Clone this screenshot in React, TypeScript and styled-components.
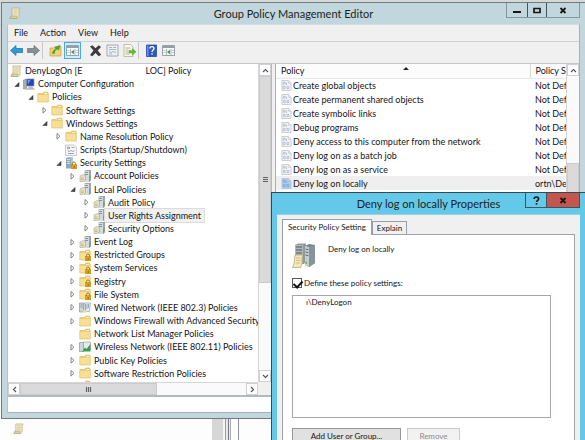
import React from 'react';
import styled, { createGlobalStyle, css } from 'styled-components';

const uiFont = 'Lato, "Open Sans", sans-serif';

const Global = createGlobalStyle`
  * { box-sizing: border-box; }
  html, body { margin: 0; padding: 0; }
  body { font-family: ${uiFont}; font-size: 9px; line-height: 13px; color: #15151a; overflow: hidden; }
  button { font: inherit; color: inherit; padding: 0; border: 0; background: none; }
  ul { list-style: none; margin: 0; padding: 0; }
`;

/* ---------- icons ---------- */

const Svg = styled.svg`
  display: block;
  flex: none;
`;

type IconName =
  | 'scroll' | 'computer' | 'folder' | 'script' | 'security' | 'server'
  | 'lockfolder' | 'wired' | 'wireless' | 'policy' | 'policySelected';

const Folder = () => (
  <>
    <path d="M.8 2.500h5l1-1.500h4v1.500h.5v8.500H.8z" fill="#eecb6c" stroke="#dcb85f" strokeWidth=".6" />
    <path d="M1.200 4h9.600v6.500H1.200z" fill="#f8df98" />
    <path d="M7.200 2h3v1h-3z" fill="#fff6d4" />
  </>
);

const Lock = () => (
  <>
    <path d="M7.500 8V6.500a1.500 1.500 0 0 1 3 0V8" fill="none" stroke="#a5781a" strokeWidth="1" />
    <rect x="6.500" y="7.500" width="5.500" height="4.500" fill="#e0a01c" stroke="#b98418" strokeWidth=".5" />
    <path d="M9.200 9v1.800" stroke="#7b5a18" strokeWidth=".8" />
  </>
);

const Server = () => (
  <>
    <path d="M5 1l2-1h5v10l-1.500 2H5z" fill="#9aa6ab" />
    <path d="M5 1h5v11H5z" fill="#d3dbde" />
    <path d="M6 2.500h3M6 4.500h3" stroke="#718087" strokeWidth=".8" />
    <path d="M10.800 6v5" stroke="#56b04a" strokeWidth="1" />
  </>
);

const PolicySheet = ({ tint, ink }: { tint: string; ink: string }) => (
  <>
    <path d="M1 .5h7l3 3v8H1z" fill={tint} stroke="#bcc0c9" strokeWidth=".8" />
    <path d="M8 .5v3h3" fill="none" stroke="#bcc0c9" strokeWidth=".7" />
    <path d="M2.500 2.500h2v2h-2zM2.500 7h2v2.500h-2zM6.500 7h2v2.500h-2zM6 3v2.500" fill="none" stroke={ink} strokeWidth=".8" />
  </>
);

const drawings: Record<IconName, React.ReactNode> = {
  scroll: (
    <>
      <path d="M3 1h8l-1 2v6.500l-1.500 2H1l1-2.500h1z" fill="#f1e7c6" stroke="#b9aa82" strokeWidth=".7" />
      <path d="M4.500 3h4M4.500 5h4M4.300 7h4" stroke="#c9bd98" strokeWidth=".7" />
      <path d="M1 11.500l1-2.500h6l-.5 2.500z" fill="#dccf9f" stroke="#a99a70" strokeWidth=".5" />
    </>
  ),
  computer: (
    <>
      <path d="M.5 2l3-1v9l-3 1z" fill="#a6adb4" stroke="#747d86" strokeWidth=".5" />
      <path d="M3.500 1h7.500v7H3.500z" fill="#2447b8" stroke="#8990a0" strokeWidth=".7" />
      <path d="M4.500 2h3L5 6.500z" fill="#6e9cf0" />
      <path d="M6 8h3l1.500 2.500H4.500z" fill="#b9bec6" />
      <path d="M2 11h9.500" stroke="#8e959e" />
    </>
  ),
  folder: <Folder />,
  script: (
    <>
      <path d="M.5 1h9l2 2v8.500H.5z" fill="#f4f5f6" stroke="#b5b9be" strokeWidth=".7" />
      <path d="M2.500 3h2v1.500h-2zM6.500 3.500h3M2.500 6.500l1.500 1 2-1 2 1 1.500-1M3 9.500h6" fill="none" stroke="#8b9299" strokeWidth=".8" />
    </>
  ),
  security: (
    <>
      <path d="M1 1l2-1h5v11H1z" fill="#b3c6d2" />
      <path d="M1 1h5v10.500H1z" fill="#8fa9b9" />
      <path d="M2 2.500h3M2 4.500h3M2 6.500h3" stroke="#e4edf2" strokeWidth=".8" />
      <Lock />
    </>
  ),
  server: (
    <>
      <Server />
      <path d="M1 6l3-1.500 2.500 1V10L4 11.500H1z" fill="#e9e0c0" stroke="#9d9878" strokeWidth=".5" />
      <path d="M2 8h2.500M2 9.500h2.500" stroke="#aaa27a" strokeWidth=".6" />
    </>
  ),
  lockfolder: (
    <>
      <Folder />
      <Lock />
    </>
  ),
  wired: (
    <>
      <path d="M.5 2h4v9h-4z" fill="#cfd6da" stroke="#7d888f" strokeWidth=".6" />
      <path d="M1.500 4h2M1.500 6h2" stroke="#6a767d" strokeWidth=".7" />
      <path d="M5 2h6.500l-1 8.500H5z" fill="#e8edf0" stroke="#7e97a8" strokeWidth=".6" />
      <path d="M6.500 3v6M8 3v5M9.500 3v4" stroke="#5f93b5" strokeWidth=".7" />
      <path d="M4 9h4v2.500H4z" fill="#e5d9a8" />
    </>
  ),
  wireless: (
    <>
      <path d="M.5 1.500h4v9h-4z" fill="#cfd6da" stroke="#7d888f" strokeWidth=".6" />
      <path d="M4.500 1h7v8h-7z" fill="#e3ece6" stroke="#8aa092" strokeWidth=".6" />
      <path d="M3 10.500h8.500V3L7.500 8 6 6.500z" fill="#3f9a55" />
    </>
  ),
  policy: <PolicySheet tint="#f3f4f7" ink="#a9afbe" />,
  policySelected: <PolicySheet tint="#a9cff2" ink="#6f9fd0" />,
};

const Icon = ({ name, size = 11 }: { name: IconName; size?: number }) => (
  <Svg width={size} height={size} viewBox="0 0 12 12" aria-hidden="true">{drawings[name]}</Svg>
);

const Chevron = ({ d }: { d: string }) => (
  <Svg width="7" height="7" viewBox="0 0 7 7" aria-hidden="true">
    <path d={d} fill="none" stroke="#55585c" strokeWidth="1.200" />
  </Svg>
);

const chevrons = {
  up: 'M1 5l2.500-2.500L6 5',
  down: 'M1 2l2.500 2.500L6 2',
  left: 'M5 1L2.500 3.500 5 6',
  right: 'M2 1l2.500 2.500L2 6',
};

const ConsoleGlyph = () => (
  <>
    <path d="M.5 1.500h12v10H.5z" fill="#f6f8f9" stroke="#8f9aa2" strokeWidth=".9" />
    <path d="M1 2h11v2H1z" fill="#93a0aa" />
    <path d="M4.500 5v6M9 5v6" stroke="#9aa5ad" strokeWidth=".8" />
    <path d="M8 5.800v4.400L5 8z" fill="#3aa544" />
    <path d="M10 6.500h2M10 8.500h2M1.500 6.500h2M1.500 8.500h2" stroke="#b0bcc5" strokeWidth=".8" />
  </>
);

const toolDrawings = {
  back: <path d="M.5 6.500L6 1.500v3h6.500v4H6v3z" fill="#2b9be0" stroke="#1c6ea8" strokeWidth=".7" />,
  forward: <path d="M12.500 6.500L7 1.500v3H.5v4H7v3z" fill="#8b8e91" stroke="#6b6e71" strokeWidth=".7" />,
  up: (
    <>
      <path d="M1 4h4l1-1.500h6V12H1z" fill="#f0d27c" stroke="#c79f43" strokeWidth=".7" />
      <path d="M3.500 9.500C3.500 7 5 5.500 7 5.300L6 3.500l5-2.300-1.300 5-1.200-1.300C6.500 5.500 5.500 7 5.500 9.500z" fill="#42b035" stroke="#2b8423" strokeWidth=".4" />
    </>
  ),
  console: <ConsoleGlyph />,
  remove: <path d="M1 2.500L4.500 6.500 1 11l2.300 1.200L6.500 9l3.200 3.200 2.500-1.500-3.500-4.200L12 3 9.800 1.200 6.500 4.300 3.300 1.200z" fill="#3a3d40" />,
  properties: (
    <>
      <path d="M1 1h11v11H1z" fill="#eef1f4" stroke="#97a0a8" strokeWidth=".9" />
      <path d="M3 3.500h3M7 3.500h3M3 5.500h7M3 7.500l2 1 2-1 3 1M3 10h3" fill="none" stroke="#94a4b5" strokeWidth=".8" />
    </>
  ),
  exportList: (
    <>
      <path d="M1 .5h6.500L10 3v9.500H1z" fill="#fbf8e6" stroke="#a9a590" strokeWidth=".7" />
      <path d="M2.500 4h5M2.500 6h3M2.500 8h3M2.500 10h4" stroke="#9a9680" strokeWidth=".7" />
      <path d="M6 6.500h3.500v-2l3.500 3.300-3.500 3.200V9H6z" fill="#62bf3c" stroke="#3d9224" strokeWidth=".4" />
    </>
  ),
  help: (
    <>
      <path d="M1.500 1h10v11.500h-10z" fill="#2f56c2" stroke="#1c3a92" strokeWidth=".7" />
      <path d="M2 1.500h1.500v10.500H2z" fill="#6f8fe4" />
      <path d="M5 4.500c0-2.400 4-2.400 4 0 0 1.500-2 1.700-2 3.500" fill="none" stroke="#fff" strokeWidth="1.300" />
      <path d="M6.300 9.200h1.500v1.400H6.300z" fill="#fff" />
    </>
  ),
};
type Tool = keyof typeof toolDrawings;

/* ---------- desktop ---------- */

const Desktop = styled.main`
  position: relative;
  height: 100vh;
  overflow: hidden;
  background: #fdfdfd;
  display: flex;
  flex-direction: column;
  justify-content: space-between;
`;

const BackTop = styled.div`
  height: 160px;
  background: #d5d7d8;
`;

const BackBottom = styled.div`
  height: 22px;
  display: flex;
`;

const BackTree = styled.div`
  flex: none;
  width: 212px;
  padding: 5px 0 0 13px;
`;

const BackScroll = styled.div`
  flex: none;
  width: 27px;
  border-right: 1px solid #8d9096;
  background: linear-gradient(90deg, #d6d6d6 11px, #f4f4f4 11px 13px, #9b9ea2 13px 14px, #e8e8e8 14px 16px, #777a7e 16px 17px, #e8e8e8 17px 18px, #a8abb0 18px 19px, #fdfdfd 19px);
`;

/* ---------- editor window ---------- */

const EditorWindow = styled.section`
  position: absolute;
  inset: 2px 0 21px 1px;
  display: flex;
  flex-direction: column;
  border: 1px solid #74797c;
  border-right: 0;
  padding: 0 5px 5px;
  background: #c2d6dd;
`;

const TitleBar = styled.header<{ $height: number }>`
  display: grid;
  grid-template-columns: 1fr auto 1fr;
  flex: none;
  height: ${p => p.$height}px;
`;

const TitleIcon = styled.span`
  padding: 4px 0 0 2px;
`;

const Title = styled.h1`
  grid-column: 2;
  margin: 0;
  font-size: 11px;
  font-weight: 400;
  line-height: 22px;
  color: #1c1f22;
  white-space: nowrap;
`;

const Caption = styled.div<{ $tone: string }>`
  display: flex;
  justify-self: end;
  height: 15px;
  border: 1px solid ${p => p.$tone};
  border-top: 0;
`;

const CaptionButton = styled.button<{ $width: number; $tone: string; $danger?: boolean }>`
  display: flex;
  align-items: center;
  justify-content: center;
  width: ${p => p.$width}px;
  background: ${p => (p.$danger ? '#c3574e' : 'transparent')};
  & + & { border-left: 1px solid ${p => p.$tone}; }
`;

const Client = styled.div`
  flex: 1;
  min-height: 0;
  display: flex;
  flex-direction: column;
  border: 1px solid #a7b2b8;
  border-top-color: #d5dde0;
  border-left-color: #b3c3ca;
  background: #f0f0f0;
`;

const MenuBar = styled.nav`
  flex: none;
  display: flex;
  gap: 12px;
  height: 17px;
  padding-left: 6px;
  border-bottom: 1px solid #d0d1d3;
`;

const MenuItem = styled.button`
  line-height: 16px;
`;

const ToolBar = styled.div`
  flex: none;
  display: flex;
  height: 22px;
  padding: 0 0 4px;
  border-bottom: 1px solid #c3c6ca;
`;

const ToolButton = styled.button<{ $active?: boolean; $gap?: boolean }>`
  display: flex;
  align-items: center;
  justify-content: center;
  width: 17px;
  height: 17px;
  ${p => p.$active && css`background: #d3eaf9; border: 1px solid #4aa9de;`}
  ${p => p.$gap && css`margin-left: 6px;`}
`;

const Separator = styled.span`
  width: 5px;
  border-left: 1px solid #c6c8ca;
`;

const Panes = styled.div`
  flex: 1;
  min-height: 0;
  display: flex;
  gap: 3px;
`;

const TreePane = styled.div`
  flex: none;
  width: 264px;
  display: grid;
  grid-template-columns: 1fr 13px;
  grid-template-rows: 1fr 13px;
  border-right: 1px solid #b4b9bf;
  background: #f0f0f0;
`;

const TreeView = styled.div`
  min-height: 0;
  overflow: hidden;
  background: #fff;
`;

const TreeRows = styled.ul`
  display: grid;
  grid-auto-rows: 1fr;
  height: 329px;
`;

const TreeRow = styled.li<{ $level: number }>`
  display: flex;
  align-items: center;
  padding-left: ${p => 2 + Math.max(p.$level - 1, 0) * 14}px;
  white-space: pre;
`;

const Toggle = styled.button`
  display: flex;
  justify-content: center;
  flex: none;
  width: 13px;
`;

const Label = styled.span<{ $selected?: boolean }>`
  padding-left: 3px;
  ${p => p.$selected && css`padding-right: 3px; background: #f0f0f0; outline: 1px solid #dcdcdc;`}
`;

const RedactedGap = styled.span`
  display: inline-block;
  width: 63px;
`;

const ScrollBar = styled.div<{ $horizontal?: boolean }>`
  display: flex;
  flex-direction: ${p => (p.$horizontal ? 'row' : 'column')};
  min-width: 0;
  min-height: 0;
  border: 0 solid #d5d6d8;
  border-width: ${p => (p.$horizontal ? '1px 0 0' : '0 0 0 1px')};
  background: #fafafa;
`;

const ScrollButton = styled.button`
  display: flex;
  align-items: center;
  justify-content: center;
  flex: none;
  width: 12px;
  height: 12px;
  background: #fff;
  outline: 1px solid #cfd0d2;
  outline-offset: -1px;
`;

const Thumb = styled.div<{ $grow: number }>`
  flex: ${p => p.$grow} 0 0;
  display: flex;
  align-items: center;
  justify-content: center;
  background: #dadada;
  border: 1px solid #cbcbcd;
`;

const Track = styled.div<{ $grow: number }>`
  flex: ${p => p.$grow} 0 0;
`;

const ListPane = styled.div`
  flex: 1;
  min-width: 0;
  display: flex;
  border-left: 1px solid #a9aeb4;
  background: #fff;
`;

const ListView = styled.div`
  flex: 1;
  min-width: 0;
  overflow: hidden;
`;

const PolicyTable = styled.table`
  width: 100%;
  table-layout: fixed;
  border-collapse: collapse;
`;

const HeadCell = styled.th<{ $narrow?: boolean }>`
  position: relative;
  width: ${p => (p.$narrow ? '36px' : 'auto')};
  height: 14px;
  padding: 0 0 0 5px;
  font-weight: 400;
  text-align: left;
  white-space: nowrap;
  overflow: hidden;
  background: #fcfcfc;
  border-bottom: 1px solid #e8e8e8;
  ${p => p.$narrow && css`border-left: 1px solid #d8d8da;`}
`;

const SortMark = styled.svg`
  position: absolute;
  top: 2px;
  left: 50%;
`;

const PolicyRow = styled.tr<{ $selected?: boolean }>`
  background: ${p => (p.$selected ? '#efefef' : 'transparent')};
`;

const Cell = styled.td`
  height: 14px;
  padding: 0 0 0 5px;
  white-space: nowrap;
  overflow: hidden;
`;

const NameCell = styled.div`
  display: flex;
  align-items: center;
  gap: 1px;
`;

const StatusBar = styled.footer`
  flex: none;
  height: 17px;
  border-top: 2px solid #b4b9bf;
  background: #fff;
`;

/* ---------- properties dialog ---------- */

const Dialog = styled.section`
  position: absolute;
  inset: 192px 0 0 271px;
  display: flex;
  flex-direction: column;
  padding: 0 5px;
  border: solid #2f4a58;
  border-width: 1px 0 0 1px;
  background: #64c9e9;
`;

const DialogBody = styled.div`
  flex: 1;
  min-height: 0;
  display: flex;
  flex-direction: column;
  padding: 5px 5px 0;
  border-top: 1px solid #9ccfe0;
  background: #f0f0f0;
  font-size: 8px;
`;

const Tabs = styled.div`
  display: flex;
  align-items: flex-end;
  height: 14px;
  flex: none;
`;

const Tab = styled.button<{ $active?: boolean }>`
  height: 13px;
  padding: 0 4px;
  line-height: 12px;
  border: 1px solid #9a9da5;
  border-bottom: 0;
  ${p => p.$active && css`
    height: 16px;
    padding: 0 5px 2px;
    margin-bottom: -1px;
    z-index: 1;
    background: #fff;
  `}
`;

const TabPanel = styled.form`
  flex: 1;
  min-height: 0;
  padding: 8px 23px 0 9px;
  background: #fff;
  border: solid #a0a3aa;
  border-width: 1px 1px 0;
`;

const Subject = styled.div`
  display: flex;
  gap: 12px;
  height: 35px;
`;

const SubjectName = styled.span`
  line-height: 12px;
`;

const CheckLabel = styled.label`
  display: flex;
  align-items: center;
  gap: 2px;
  height: 10px;
`;

const CheckBox = styled.input`
  appearance: none;
  position: relative;
  width: 10px;
  height: 10px;
  margin: 0;
  border: 1px solid #55585c;
  background: #fff;
  &:checked::after {
    content: '';
    position: absolute;
    left: 2px;
    top: 0;
    width: 4px;
    height: 7px;
    border: solid #111;
    border-width: 0 2px 2px 0;
    transform: rotate(42deg);
  }
`;

const Members = styled.ul`
  height: 123px;
  margin: 7px 0 10px;
  border: 1px solid #a3a6ae;
  background: #fff;
`;

const Member = styled.li`
  padding-left: 13px;
  line-height: 13px;
`;

const Actions = styled.div`
  display: flex;
  gap: 6px;
`;

const ActionButton = styled.button<{ $wide?: boolean }>`
  width: ${p => (p.$wide ? 109 : 53)}px;
  height: 17px;
  color: #15151a;
  border: 1px solid #94979c;
  background: #e1e1e1;
  &:disabled { color: #8b8d92; border-color: #c8cacd; background: #f2f2f2; }
`;

/* ---------- data ---------- */

type Node = { level: number; icon: IconName; text: React.ReactNode; state?: 'open' | 'closed'; selected?: boolean };

const nodes: Node[] = [
  { level: 0, icon: 'scroll', text: <>DenyLogOn [E<RedactedGap />LOC] Policy</> },
  { level: 1, icon: 'computer', text: 'Computer Configuration', state: 'open' },
  { level: 2, icon: 'folder', text: 'Policies', state: 'open' },
  { level: 3, icon: 'folder', text: 'Software Settings', state: 'closed' },
  { level: 3, icon: 'folder', text: 'Windows Settings', state: 'open' },
  { level: 4, icon: 'folder', text: 'Name Resolution Policy', state: 'closed' },
  { level: 4, icon: 'script', text: 'Scripts (Startup/Shutdown)' },
  { level: 4, icon: 'security', text: 'Security Settings', state: 'open' },
  { level: 5, icon: 'server', text: 'Account Policies', state: 'closed' },
  { level: 5, icon: 'server', text: 'Local Policies', state: 'open' },
  { level: 6, icon: 'server', text: 'Audit Policy', state: 'closed' },
  { level: 6, icon: 'server', text: 'User Rights Assignment', state: 'closed', selected: true },
  { level: 6, icon: 'server', text: 'Security Options', state: 'closed' },
  { level: 5, icon: 'server', text: 'Event Log', state: 'closed' },
  { level: 5, icon: 'lockfolder', text: 'Restricted Groups', state: 'closed' },
  { level: 5, icon: 'lockfolder', text: 'System Services', state: 'closed' },
  { level: 5, icon: 'lockfolder', text: 'Registry', state: 'closed' },
  { level: 5, icon: 'lockfolder', text: 'File System', state: 'closed' },
  { level: 5, icon: 'wired', text: 'Wired Network (IEEE 802.3) Policies', state: 'closed' },
  { level: 5, icon: 'folder', text: 'Windows Firewall with Advanced Security', state: 'closed' },
  { level: 5, icon: 'folder', text: 'Network List Manager Policies' },
  { level: 5, icon: 'wireless', text: 'Wireless Network (IEEE 802.11) Policies', state: 'closed' },
  { level: 5, icon: 'folder', text: 'Public Key Policies', state: 'closed' },
  { level: 5, icon: 'folder', text: 'Software Restriction Policies', state: 'closed' },
  { level: 5, icon: 'folder', text: 'Network Access Protection', state: 'closed' },
];

const policies: [string, string][] = [
  ['Create global objects', 'Not Defined'],
  ['Create permanent shared objects', 'Not Defined'],
  ['Create symbolic links', 'Not Defined'],
  ['Debug programs', 'Not Defined'],
  ['Deny access to this computer from the network', 'Not Defined'],
  ['Deny log on as a batch job', 'Not Defined'],
  ['Deny log on as a service', 'Not Defined'],
  ['Deny log on locally', 'ortn\\DenyLogon'],
];
const selectedPolicy = 'Deny log on locally';

/* ---------- pieces ---------- */

const TreeToggle = ({ state }: { state?: 'open' | 'closed' }) => (
  <Toggle aria-label={state === 'open' ? 'Collapse' : 'Expand'} disabled={!state}>
    <Svg width="7" height="8" viewBox="0 0 7 8">
      {state === 'open' && <path d="M6 2.500v4H2z" fill="#4a4a4a" stroke="#333" strokeWidth=".6" />}
      {state === 'closed' && <path d="M2 1.500l3 2.800-3 2.800z" fill="#fff" stroke="#777" strokeWidth=".9" />}
    </Svg>
  </Toggle>
);

const ToolItem = ({ tool, label, active, gap }: { tool: Tool; label: string; active?: boolean; gap?: boolean }) => (
  <ToolButton aria-label={label} $active={active} $gap={gap}>
    <Svg width="13" height="13" viewBox="0 0 13 13">{toolDrawings[tool]}</Svg>
  </ToolButton>
);

const Grip = ({ d }: { d: string }) => (
  <Svg width="7" height="7" viewBox="0 0 7 7"><path d={d} stroke="#606366" strokeWidth="1.200" /></Svg>
);

const CloseGlyph = () => (
  <Svg width="8" height="7" viewBox="0 0 8 7"><path d="M1.500 1l5 5M6.500 1l-5 5" stroke="#15181a" strokeWidth="1.800" /></Svg>
);

const Editor = () => (
  <EditorWindow aria-label="Group Policy Management Editor">
    <TitleBar $height={21}>
      <TitleIcon><Icon name="scroll" size={12} /></TitleIcon>
      <Title>Group Policy Management Editor</Title>
      <Caption $tone="#87969d">
        <CaptionButton $width={20} $tone="#87969d" aria-label="Minimize">
          <Svg width="8" height="8" viewBox="0 0 8 8"><path d="M0 5h8v2H0z" fill="#15181a" /></Svg>
        </CaptionButton>
        <CaptionButton $width={19} $tone="#87969d" aria-label="Maximize">
          <Svg width="8" height="7" viewBox="0 0 8 7"><path d="M1 1.500h6v4H1z" fill="none" stroke="#15181a" strokeWidth="1.700" /></Svg>
        </CaptionButton>
        <CaptionButton $width={33} $tone="#87969d" aria-label="Close"><CloseGlyph /></CaptionButton>
      </Caption>
    </TitleBar>
    <Client>
      <MenuBar>
        {['File', 'Action', 'View', 'Help'].map(m => <MenuItem key={m}>{m}</MenuItem>)}
      </MenuBar>
      <ToolBar>
        <ToolItem tool="back" label="Back" />
        <ToolItem tool="forward" label="Forward" />
        <Separator />
        <ToolItem tool="up" label="Up one level" />
        <ToolItem tool="console" label="Show console tree" active />
        <ToolItem tool="remove" label="Delete" gap />
        <ToolItem tool="properties" label="Properties" />
        <ToolItem tool="exportList" label="Export list" />
        <Separator />
        <ToolItem tool="help" label="Help" />
        <ToolItem tool="console" label="Show action pane" />
      </ToolBar>
      <Panes>
        <TreePane>
          <TreeView>
            <TreeRows role="tree">
              {nodes.map((n, i) => (
                <TreeRow key={i} role="treeitem" aria-selected={!!n.selected} $level={n.level}>
                  {n.level > 0 && <TreeToggle state={n.state} />}
                  <Icon name={n.icon} size={12} />
                  <Label $selected={n.selected}>{n.text}</Label>
                </TreeRow>
              ))}
            </TreeRows>
          </TreeView>
          <ScrollBar>
            <ScrollButton aria-label="Scroll up"><Chevron d={chevrons.up} /></ScrollButton>
            <Thumb $grow={207}><Grip d="M1 1.500h5M1 3.500h5M1 5.500h5" /></Thumb>
            <Track $grow={88} />
            <ScrollButton aria-label="Scroll down"><Chevron d={chevrons.down} /></ScrollButton>
          </ScrollBar>
          <ScrollBar $horizontal>
            <ScrollButton aria-label="Scroll left"><Chevron d={chevrons.left} /></ScrollButton>
            <Thumb $grow={136}><Grip d="M1.500 1v5M3.500 1v5M5.500 1v5" /></Thumb>
            <Track $grow={90} />
            <ScrollButton aria-label="Scroll right"><Chevron d={chevrons.right} /></ScrollButton>
          </ScrollBar>
        </TreePane>
        <ListPane>
          <ListView>
            <PolicyTable>
              <thead>
                <tr>
                  <HeadCell>
                    Policy
                    <SortMark width="6" height="4" viewBox="0 0 6 4"><path d="M0 4l3-3 3 3z" fill="#222" /></SortMark>
                  </HeadCell>
                  <HeadCell $narrow>Policy Setting</HeadCell>
                </tr>
              </thead>
              <tbody>
                {policies.map(([name, setting]) => (
                  <PolicyRow key={name} $selected={name === selectedPolicy}>
                    <Cell>
                      <NameCell>
                        <Icon name={name === selectedPolicy ? 'policySelected' : 'policy'} />
                        {name}
                      </NameCell>
                    </Cell>
                    <Cell>{setting}</Cell>
                  </PolicyRow>
                ))}
              </tbody>
            </PolicyTable>
          </ListView>
          <ScrollBar>
            <ScrollButton aria-label="Scroll up"><Chevron d={chevrons.up} /></ScrollButton>
            <Track $grow={87} />
            <Thumb $grow={150} />
            <Track $grow={80} />
          </ScrollBar>
        </ListPane>
      </Panes>
      <StatusBar />
    </Client>
  </EditorWindow>
);

const Properties = () => (
  <Dialog role="dialog" aria-label="Deny log on locally Properties">
    <TitleBar $height={21}>
      <Title as="h2">Deny log on locally Properties</Title>
      <Caption $tone="#3c5561">
        <CaptionButton $width={20} $tone="#3c5561" aria-label="Help">
          <Svg width="7" height="9" viewBox="0 0 7 9">
            <path d="M1.200 3c0-2.600 4.400-2.600 4.400 0 0 1.400-2 1.400-2 3" fill="none" stroke="#15181a" strokeWidth="1.600" />
            <path d="M2.700 7h1.700v1.600H2.700z" fill="#15181a" />
          </Svg>
        </CaptionButton>
        <CaptionButton $width={33} $tone="#3c5561" $danger aria-label="Close"><CloseGlyph /></CaptionButton>
      </Caption>
    </TitleBar>
    <DialogBody>
      <Tabs role="tablist">
        <Tab role="tab" aria-selected $active>Security Policy Setting</Tab>
        <Tab role="tab" aria-selected={false}>Explain</Tab>
      </Tabs>
      <TabPanel role="tabpanel" onSubmit={e => e.preventDefault()}>
        <Subject>
          <Svg width="24" height="25" viewBox="0 0 24 25" aria-hidden="true">
            <path d="M3 2l3-1.500h8V18l-2 3H3z" fill="#8f999e" />
            <path d="M3 2h8v18H3z" fill="#aeb8bc" />
            <path d="M4 4h6M4 7h6M4 10h6" stroke="#4f5a60" strokeWidth="1.200" />
            <path d="M13 3l4-2 6 1v18l-6 4-4-2z" fill="#78848a" />
            <path d="M13 3l4 1v20l-4-2z" fill="#c5ced1" />
            <path d="M17 4l6-2v18l-6 4z" fill="#87949a" />
            <path d="M13.500 6l3 .7M13.500 9l3 .7M13.500 12l3 .7" stroke="#5f6b71" />
            <path d="M14.300 18.500v2.500" stroke="#68b84e" strokeWidth="1.500" />
            <path d="M3 12h8l-1 3v6l-1.500 3.500H.5L2 21z" fill="#f3e7bd" stroke="#b49f62" strokeWidth=".7" />
            <path d="M4 15h4.500M4 17.500h4.500M4 20h4" stroke="#c5b27a" strokeWidth=".8" />
          </Svg>
          <SubjectName>Deny log on locally</SubjectName>
        </Subject>
        <CheckLabel>
          <CheckBox type="checkbox" defaultChecked />
          Define these policy settings:
        </CheckLabel>
        <Members role="listbox" aria-label="Members">
          <Member role="option" aria-selected={false}>ı\DenyLogon</Member>
        </Members>
        <Actions>
          <ActionButton type="button" $wide>Add User or Group...</ActionButton>
          <ActionButton type="button" disabled>Remove</ActionButton>
        </Actions>
      </TabPanel>
    </DialogBody>
  </Dialog>
);

export default function App() {
  return (
    <Desktop>
      <Global />
      <BackTop />
      <BackBottom>
        <BackTree>
          <Icon name="scroll" size={11} />
        </BackTree>
        <BackScroll />
      </BackBottom>
      <Editor />
      <Properties />
    </Desktop>
  );
}
